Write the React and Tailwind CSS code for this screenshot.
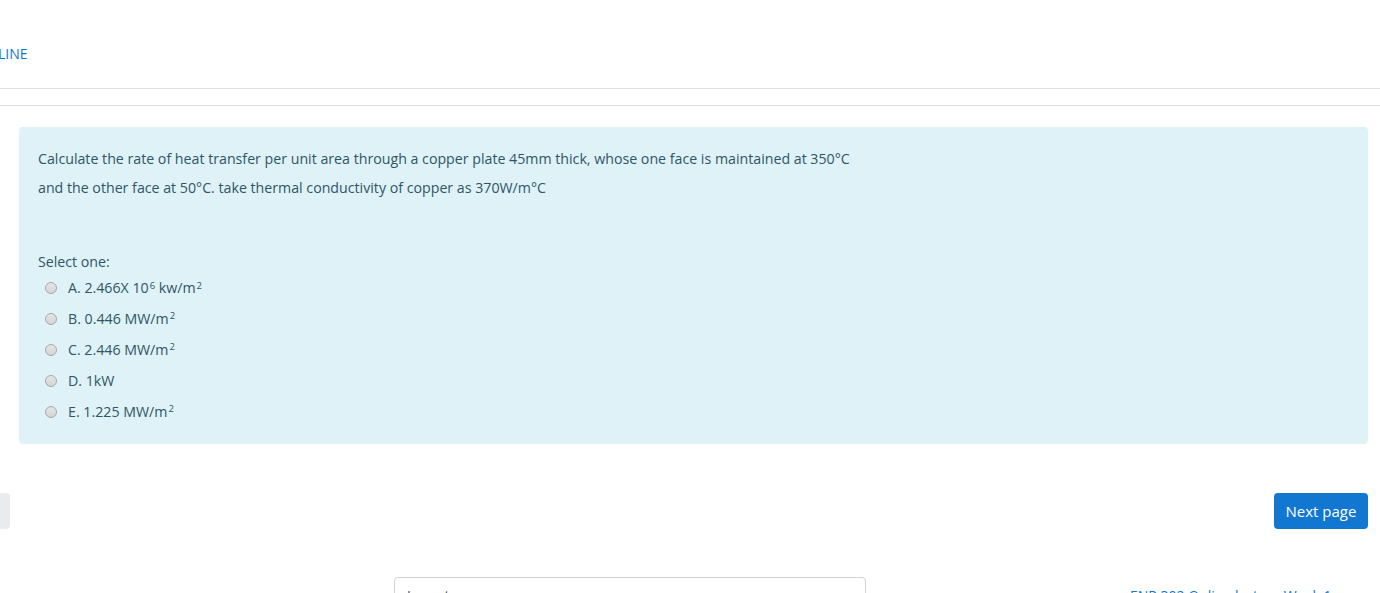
export default function App() {
  const sup = (s) => <sup className="text-[9.5px] ml-[1px]">{s}</sup>;
  const opts = [
    ["A.", <>2.466X 10{sup("6")} kw/m{sup("2")}</>],
    ["B.", <>0.446 MW/m{sup("2")}</>],
    ["C.", <>2.446 MW/m{sup("2")}</>],
    ["D.", <>1kW</>],
    ["E.", <>1.225 MW/m{sup("2")}</>],
  ];
  return (
    <div className="w-[1380px] h-[593px] overflow-hidden bg-white text-[14px]" style={{ fontFamily: '"Open Sans", "Noto Sans", sans-serif' }}>
      <div className="h-[89px] border-b border-[#dee2e6] flex items-start pt-[43px]">
        <span className="text-[#1177d1] text-[14px] -ml-[2px] leading-[22px]">LINE</span>
      </div>
      <div className="h-[17px] border-b border-[#dee2e6]"></div>
      <div className="pt-[21px] pl-[19px] pr-[12px]">
        <div className="bg-[#def2f8] rounded-[4px] text-[#2f5665] h-[317px] pl-[19px] pt-[21px] text-[14.2px]">
          <p className="leading-[22px] mb-[7px]">Calculate the rate of heat transfer per unit area through a copper plate 45mm thick, whose one face is maintained at 350°C</p>
          <p className="leading-[22px]">and the other face at 50°C. take thermal conductivity of copper as 370W/m°C</p>
          <div className="mt-[52px] leading-[22px]">Select one:</div>
          <div className="flex flex-col">
            {opts.map(([l, t], i) => (
              <div key={i} className="flex items-center h-[30.8px] pl-[7px]">
                <span className="w-[12px] h-[12px] rounded-full border border-[#a9a9a9] bg-gradient-to-b from-[#e6e6e6] to-[#d4d4d4] mr-[11px]"></span>
                <span className="leading-[20px]">{l} {t}</span>
              </div>
            ))}
          </div>
        </div>
      </div>
      <div className="flex justify-between items-start mt-[49px] pr-[12px]">
        <div className="w-[10px] h-[36px] bg-[#e9ecef] rounded-r-[4px]"></div>
        <button className="bg-[#1177d1] text-white text-[15px] rounded-[4px] h-[36px] w-[94px] leading-[36px]">Next page</button>
      </div>
      <div className="relative mt-[48px] h-[40px]">
        <div className="absolute left-[394px] top-0 w-[472px] h-[38px] border border-[#ced4da] rounded-[4px] px-[12px] pt-[7px] text-[#495057] text-[14px] leading-[22px]">
          Jump to...
          <span className="absolute right-[12px] top-[7px] text-[10px]">▲</span>
        </div>
        <span className="absolute left-[1130px] top-[8px] text-[#1177d1] text-[14px] leading-[22px]">ENR 302 Online lecture Week 1</span>
      </div>
    </div>
  );
}
